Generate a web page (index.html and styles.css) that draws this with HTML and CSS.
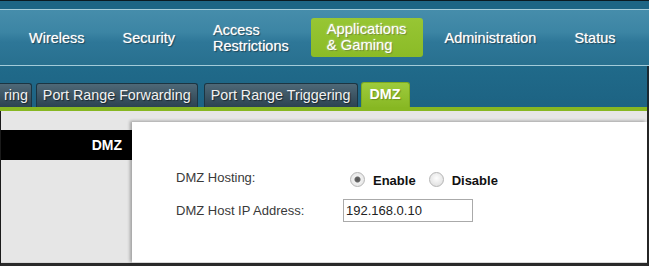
FILE: index.html
```html
<!DOCTYPE html>
<html>
<head>
<meta charset="utf-8">
<link rel="stylesheet" href="styles.css">
</head>
<body>
<div class="frame">
  <div class="topband"></div>
  <div class="hl"></div>
  <nav class="nav">
    <div class="nav-item">Wireless</div>
    <div class="nav-item">Security</div>
    <div class="nav-item two">Access<br>Restrictions</div>
    <div class="nav-item two active">Applications<br>&amp; Gaming</div>
    <div class="nav-item">Administration</div>
    <div class="nav-item">Status</div>
  </nav>
  <div class="hl"></div>
  <div class="subnav">
    <div class="tab first">ring</div>
    <div class="tab">Port Range Forwarding</div>
    <div class="tab">Port Range Triggering</div>
    <div class="tab current">DMZ</div>
  </div>
  <div class="greenline"></div>
  <div class="main">
    <div class="side">
      <div class="side-title">DMZ</div>
    </div>
    <div class="panel">
      <div class="row">
        <div class="label lift">DMZ Hosting:</div>
        <div class="field">
          <input type="radio" name="dmz" class="radio first-radio" checked>
          <span class="opt">Enable</span>
          <input type="radio" name="dmz" class="radio second-radio">
          <span class="opt">Disable</span>
        </div>
      </div>
      <div class="row">
        <div class="label">DMZ Host IP Address:</div>
        <div class="field">
          <input type="text" class="ip" value="192.168.0.10">
        </div>
      </div>
    </div>
  </div>
</div>
</body>
</html>
```

FILE: styles.css
```css
* { box-sizing: border-box; }
html, body { margin: 0; padding: 0; }
body {
  width: 649px;
  height: 266px;
  overflow: hidden;
  font-family: "Liberation Sans", Arial, sans-serif;
  background: #222;
}
.frame {
  width: 649px;
  height: 266px;
  border-top: 1px solid #0b1a22;
  display: flex;
  flex-direction: column;
  overflow: hidden;
  background: #e6e6e6;
}
.topband { height: 8px; background: #1d6585; flex: none; }
.hl { height: 1px; background: #a3cbd9; flex: none; }
.nav {
  height: 55px;
  flex: none;
  display: flex;
  align-items: center;
  gap: 6px;
  padding-left: 13px;
  background: linear-gradient(to bottom, #468dab 0%, #3c85a4 40%, #2e7798 58%, #28708f 100%);
}
.nav-item {
  color: #fff;
  font-size: 14.5px;
  line-height: 16px;
  padding: 0 16px;
  text-shadow: 1px 1px 1px rgba(0,0,0,0.45), 0 0 1px rgba(255,255,255,0.8);
  white-space: nowrap;
}
.nav-item.active {
  background: linear-gradient(to bottom, #97c634 0%, #8bbb27 100%);
  border-radius: 3px;
  padding: 3px 16px 4px;
  font-size: 14.8px;
  text-shadow: 1px 1px 1px rgba(60,80,10,0.5), 0 0 2px rgba(255,255,255,0.9);
}
.subnav {
  height: 41px;
  flex: none;
  display: flex;
  align-items: flex-end;
  gap: 6px;
  background: linear-gradient(to bottom, #206a8a 0%, #1d6383 100%);
  border-right: 2px solid #1a2a33;
}
.tab {
  height: 24px;
  line-height: 23px;
  padding: 0 6px;
  font-size: 14.3px;
  color: #f2f2f2;
  background: linear-gradient(to bottom, #4e6877 0%, #2c4351 100%);
  border: 1px solid #1c3542;
  border-bottom: none;
  border-radius: 3px 3px 0 0;
  text-shadow: 1px 1px 1px rgba(0,0,0,0.5);
  white-space: nowrap;
}
.tab.first { margin-left: -3px; margin-right: -2px; padding-right: 3px; }
.tab.current {
  background: linear-gradient(to bottom, #9ecb3c 0%, #88b824 100%);
  border-color: #7eab1f;
  font-weight: bold;
  padding: 0 8px;
  margin-left: -3px;
  height: 25px;
  color: #fff;
  text-shadow: 1px 1px 1px rgba(60,80,10,0.4);
}
.greenline { height: 4px; background: #87b722; flex: none; border-right: 2px solid #2a2a2a; }
.main {
  flex: 1;
  display: flex;
  padding-top: 11px;
  background: #e6e6e6;
  border-left: 1px solid #1a1a1a;
  border-right: 2px solid #262626;
  border-bottom: 3px solid #2a2a2a;
}
.side {
  width: 131px;
  flex: none;
  padding-top: 8px;
  border-bottom: 1px solid #d8d8d8;
}
.side-title {
  height: 30px;
  background: #000;
  color: #fff;
  font-weight: bold;
  font-size: 14px;
  line-height: 30px;
  text-align: right;
  padding-right: 10px;
}
.panel {
  flex: 1;
  background: #fff;
  box-shadow: -2px -1px 3px rgba(0,0,0,0.3);
  padding: 48px 0 0 44px;
  display: flex;
  flex-direction: column;
  gap: 11px;
  border-bottom: 1px solid #d8d8d8;
}
.row {
  display: flex;
  align-items: center;
}
.label {
  width: 167px;
  flex: none;
  font-size: 13px;
  color: #3a3a3a;
}
.label.lift { padding-bottom: 3px; }
.row:first-child { height: 18px; }
.field {
  display: flex;
  align-items: center;
}
.radio {
  -webkit-appearance: none;
  appearance: none;
  width: 15px;
  height: 15px;
  margin: 0;
  border-radius: 50%;
  border: 1px solid #b5b5b5;
  background: radial-gradient(circle at 50% 40%, #fdfdfd 0%, #e4e4e4 70%, #d6d6d6 100%);
}
.radio:checked {
  background: radial-gradient(circle, #555 0, #666 2.5px, #f0f0f0 3.5px, #e2e2e2 100%);
}
.first-radio { margin-left: 7px; }
.second-radio { margin-left: 13px; }
.opt {
  font-size: 13px;
  font-weight: bold;
  color: #111;
  margin-left: 8px;
  padding-top: 2px;
}
.ip {
  width: 130px;
  height: 23px;
  border: 1px solid #aaaaaa;
  font-family: "Liberation Sans", Arial, sans-serif;
  font-size: 13px;
  color: #222;
  padding: 0 2px;
  margin: 0;
  outline: none;
}
```
